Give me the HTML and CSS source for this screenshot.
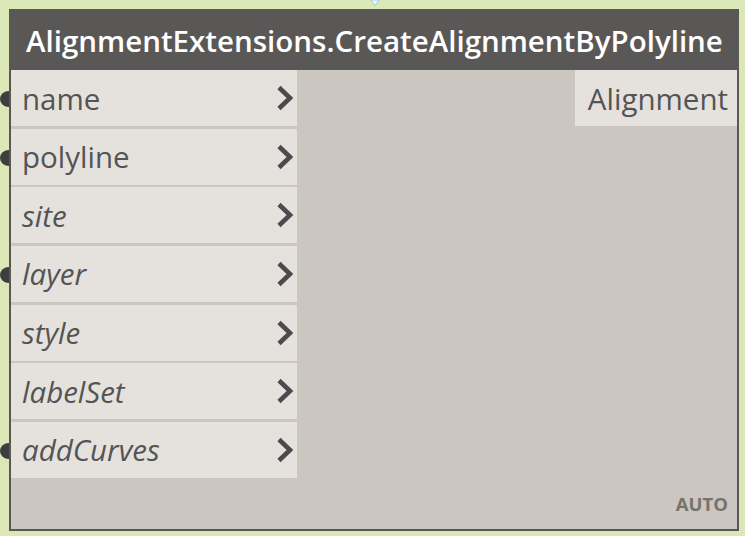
FILE: index.html
```html
<!DOCTYPE html>
<html>
<head>
<meta charset="utf-8">
<link rel="stylesheet" href="styles.css">
</head>
<body>
<div class="canvas">
  <svg class="marker" width="10" height="7" viewBox="0 0 10 7"><path d="M1 0 L9 0 L5 5.5 Z" fill="#f4f8fb" stroke="#9cc8e6" stroke-width="1"/></svg>
  <div class="node">
    <div class="header"><span class="title">AlignmentExtensions.CreateAlignmentByPolyline</span></div>
    <div class="body">
      <div class="inputs">
        <div class="port connected"><span class="pname">name</span><svg class="chev" width="18" height="26" viewBox="0 0 18 26"><path d="M3 2.5 L14 13 L3 23.5" fill="none" stroke="#4b4b4b" stroke-width="4.6"/></svg></div>
        <div class="port connected"><span class="pname">polyline</span><svg class="chev" width="18" height="26" viewBox="0 0 18 26"><path d="M3 2.5 L14 13 L3 23.5" fill="none" stroke="#4b4b4b" stroke-width="4.6"/></svg></div>
        <div class="port"><span class="pname opt">site</span><svg class="chev" width="18" height="26" viewBox="0 0 18 26"><path d="M3 2.5 L14 13 L3 23.5" fill="none" stroke="#4b4b4b" stroke-width="4.6"/></svg></div>
        <div class="port connected"><span class="pname opt">layer</span><svg class="chev" width="18" height="26" viewBox="0 0 18 26"><path d="M3 2.5 L14 13 L3 23.5" fill="none" stroke="#4b4b4b" stroke-width="4.6"/></svg></div>
        <div class="port"><span class="pname opt">style</span><svg class="chev" width="18" height="26" viewBox="0 0 18 26"><path d="M3 2.5 L14 13 L3 23.5" fill="none" stroke="#4b4b4b" stroke-width="4.6"/></svg></div>
        <div class="port"><span class="pname opt">labelSet</span><svg class="chev" width="18" height="26" viewBox="0 0 18 26"><path d="M3 2.5 L14 13 L3 23.5" fill="none" stroke="#4b4b4b" stroke-width="4.6"/></svg></div>
        <div class="port connected"><span class="pname opt">addCurves</span><svg class="chev" width="18" height="26" viewBox="0 0 18 26"><path d="M3 2.5 L14 13 L3 23.5" fill="none" stroke="#4b4b4b" stroke-width="4.6"/></svg></div>
      </div>
      <div class="outputs">
        <div class="outport">Alignment</div>
      </div>
    </div>
    <div class="footer"><span class="lacing">AUTO</span></div>
  </div>
</div>
</body>
</html>
```
FILE: styles.css
```css
html, body {
  margin: 0;
  padding: 0;
}
body {
  width: 745px;
  height: 536px;
  overflow: hidden;
  background: #dce7b8;
  font-family: "Open Sans", "DejaVu Sans", sans-serif;
}
.canvas {
  position: relative;
  width: 745px;
  height: 536px;
  padding: 9px 0 0 9px;
  box-sizing: border-box;
}
.marker {
  position: absolute;
  left: 370px;
  top: 0;
}
.node {
  width: 730px;
  height: 522px;
  box-sizing: border-box;
  border: 2px solid #5a5856;
  background: #cbc6c0;
  display: flex;
  flex-direction: column;
}
.header {
  height: 59px;
  background: #5a5856;
  display: flex;
  align-items: center;
  padding-left: 17px;
  margin: -2px -2px 0 -2px;
  padding-top: 2px;
}
.title {
  color: #ffffff;
  font-weight: 600;
  font-size: 29.5px;
  white-space: nowrap;
}
.body {
  display: flex;
  justify-content: space-between;
  align-items: flex-start;
}
.inputs {
  width: 286px;
  display: flex;
  flex-direction: column;
  gap: 2.67px;
}
.port {
  position: relative;
  height: 56px;
  background: #e5e2de;
  display: flex;
  align-items: center;
  justify-content: space-between;
  padding: 0 3px 0 11px;
}
.port.connected::before {
  content: "";
  position: absolute;
  left: -11px;
  top: 21px;
  width: 9px;
  height: 16px;
  border-radius: 9px 0 0 9px / 8px 0 0 8px;
  background: #3e3e3e;
}
.pname {
  font-size: 29.5px;
  color: #545454;
}
.pname.opt {
  font-style: italic;
}
.chev {
  display: block;
}
.outputs {
  display: flex;
  flex-direction: column;
}
.outport {
  height: 56px;
  background: #e5e2de;
  display: flex;
  align-items: center;
  padding: 0 9px 0 13px;
  font-size: 29.5px;
  color: #545454;
}
.footer {
  margin-top: auto;
  display: flex;
  justify-content: flex-end;
  padding: 0 9px 13px 0;
}
.lacing {
  font-size: 18.5px;
  font-weight: 700;
  color: #77726c;
}
```
